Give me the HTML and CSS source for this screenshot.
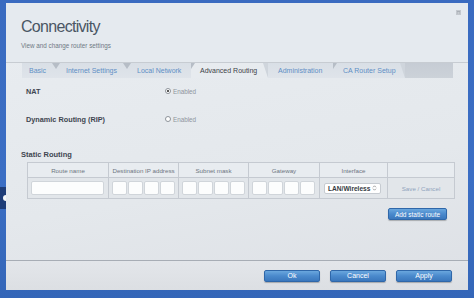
FILE: index.html
```html
<!DOCTYPE html>
<html>
<head>
<meta charset="utf-8">
<link rel="stylesheet" href="styles.css">
</head>
<body>
<div class="handle"></div>
<div class="panel">
  <div class="header">
    <div class="titles">
      <div class="title">Connectivity</div>
      <div class="subtitle">View and change router settings</div>
    </div>
    <div class="close"><svg width="4" height="4" viewBox="0 0 4 4"><path d="M0.8 0.8L3.2 3.2M3.2 0.8L0.8 3.2" stroke="#f2f4f6" stroke-width="0.7"/></svg></div>
  </div>
  <div class="tabs">
    <div class="tab w1">Basic</div>
    <div class="tab w2">Internet Settings</div>
    <div class="tab w3">Local Network</div>
    <div class="tab w4 active">Advanced Routing</div>
    <div class="tab w5">Administration</div>
    <div class="tab w6">CA Router Setup</div>
    <div class="tab-fill"></div>
  </div>
  <div class="content">
    <div class="row nat">
      <div class="label">NAT</div>
      <div class="opt"><span class="radio on"></span>Enabled</div>
    </div>
    <div class="row rip">
      <div class="label">Dynamic Routing (RIP)</div>
      <div class="opt"><span class="radio"></span>Enabled</div>
    </div>
    <div class="section">Static Routing</div>
    <table class="routes">
      <tr class="head">
        <th class="c1">Route name</th>
        <th class="c2">Destination IP address</th>
        <th class="c3">Subnet mask</th>
        <th class="c4">Gateway</th>
        <th class="c5">Interface</th>
        <th class="c6"></th>
      </tr>
      <tr class="body">
        <td><div class="inp name"></div></td>
        <td><div class="ip"><div class="inp"></div><div class="inp"></div><div class="inp"></div><div class="inp"></div></div></td>
        <td><div class="ip"><div class="inp"></div><div class="inp"></div><div class="inp"></div><div class="inp"></div></div></td>
        <td><div class="ip"><div class="inp"></div><div class="inp"></div><div class="inp"></div><div class="inp"></div></div></td>
        <td><div class="select"><span>LAN/Wireless</span><svg width="5" height="6" viewBox="0 0 5 6"><path d="M1 2.3L2.5 0.8L4 2.3M1 3.7L2.5 5.2L4 3.7" fill="none" stroke="#777" stroke-width="0.7"/></svg></div></td>
        <td class="save">Save / Cancel</td>
      </tr>
    </table>
    <div class="addrow"><div class="btn add">Add static route</div></div>
  </div>
  <div class="footer">
    <div class="btn big">Ok</div>
    <div class="btn big">Cancel</div>
    <div class="btn big">Apply</div>
  </div>
</div>
</body>
</html>
```
FILE: styles.css
```css
html, body {
  margin: 0;
  padding: 0;
}
body {
  width: 474px;
  height: 298px;
  box-sizing: border-box;
  padding: 3px 6px 8px 6px;
  background: linear-gradient(180deg, #3a6bc0 0%, #3b6ec4 60%, #3466b8 100%);
  font-family: "Liberation Sans", Arial, sans-serif;
  position: relative;
  overflow: hidden;
}
.handle {
  position: absolute;
  left: 0;
  top: 187px;
  width: 6px;
  height: 22px;
  background: #1e3d78;
}
.handle::after {
  content: "";
  position: absolute;
  left: 3px;
  top: 8px;
  width: 6px;
  height: 6px;
  border-radius: 50%;
  background: #f4f6f8;
}
.panel {
  height: 287px;
  display: flex;
  flex-direction: column;
  background: linear-gradient(170deg, #e9edf1 0%, #e4e8ec 60%, #dde0e5 100%);
  border-radius: 2px;
  position: relative;
  z-index: 1;
}
.header {
  height: 60px;
  box-sizing: border-box;
  display: flex;
  justify-content: space-between;
  align-items: flex-start;
  padding: 7px 7px 0 15px;
  border-bottom: 1px solid #c7ccd2;
  background: #e5eaef;
}
.titles {
  padding-top: 8px;
}
.title {
  font-size: 16px;
  line-height: 18px;
  color: #4a5664;
  letter-spacing: -0.7px;
}
.subtitle {
  margin-top: 6px;
  font-size: 6.3px;
  line-height: 8px;
  color: #6f7984;
}
.close {
  box-sizing: border-box;
  width: 5px;
  height: 5px;
  background: #a9afb6;
  border: 0.5px solid #c3c8ce;
  display: flex;
  align-items: center;
  justify-content: center;
}
.tabs {
  display: flex;
  height: 15px;
  margin: 0 15px 0 16px;
  background: #cfd5dc;
}
.tab {
  position: relative;
  box-sizing: border-box;
  height: 15px;
  line-height: 15px;
  font-size: 7px;
  color: #5e8fc5;
  padding-left: 7px;
  background: linear-gradient(180deg, #d9dfe6 0%, #dfe4ea 100%);
}
.tab + .tab::before {
  content: "";
  position: absolute;
  left: -4px;
  top: 0;
  border-top: 6px solid #b6bdc6;
  border-left: 4px solid transparent;
  border-right: 4px solid transparent;
}
.tab.active {
  background: #e7ebef;
  color: #3c4147;
  padding-left: 9px;
  clip-path: polygon(0 0, calc(100% - 5px) 0, 100% 100%, 0 100%);
}
.tab.active + .tab::before {
  display: none;
}
.w1 { width: 34px; }
.w2 { width: 71px; padding-left: 10px; }
.w3 { width: 64px; padding-left: 10px; }
.w4 { width: 77px; }
.w5 { width: 65px; padding-left: 10px; }
.w6 { width: 72px; padding-left: 10px; clip-path: polygon(0 0, calc(100% - 5px) 0, 100% 100%, 0 100%); }
.tab-fill {
  flex: 1;
  background: linear-gradient(180deg, #c6ccd4 0%, #ccd2d9 100%);
}
.content {
  flex: 1;
  padding: 0 20px 0 15px;
}
.row {
  display: flex;
  align-items: center;
  height: 10px;
  padding-left: 5px;
}
.nat { margin-top: 8px; }
.rip { margin-top: 18px; }
.label {
  width: 139px;
  font-size: 7.3px;
  font-weight: bold;
  color: #3e4650;
}
.opt {
  display: flex;
  align-items: center;
  font-size: 6.3px;
  color: #8e959d;
}
.radio {
  width: 4px;
  height: 4px;
  border: 0.8px solid #8d939a;
  border-radius: 50%;
  background: #fff;
  margin-right: 2px;
  position: relative;
}
.radio.on::after {
  content: "";
  position: absolute;
  left: 1px;
  top: 1px;
  width: 2px;
  height: 2px;
  border-radius: 50%;
  background: #222;
}
.section {
  margin-top: 26px;
  height: 10px;
  line-height: 10px;
  font-size: 7.5px;
  font-weight: bold;
  color: #3e4650;
}
.routes {
  margin: 2px 0 0 6px;
  border-collapse: collapse;
  width: 421px;
  table-layout: fixed;
}
.routes th, .routes td {
  border: 1px solid #c5cad1;
  padding: 0;
  text-align: center;
}
.routes th {
  height: 14px;
  font-size: 6.2px;
  font-weight: normal;
  color: #6d7580;
  background: #e8ecf0;
}
.routes td {
  height: 20px;
  background: #e2e6ea;
}
.c1 { width: 80px; }
.c2 { width: 69px; }
.c3 { width: 69px; }
.c4 { width: 70px; }
.c5 { width: 67px; }
.c6 { width: 66px; }
.inp {
  box-sizing: border-box;
  height: 14px;
  background: #fcfdfd;
  border: 1px solid #d0d5da;
  border-radius: 2px;
}
.name {
  width: 73px;
  margin-left: 3px;
}
.ip {
  display: grid;
  grid-template-columns: repeat(4, 1fr);
  gap: 1.5px;
  width: 63px;
  margin-left: 3px;
}
.select {
  box-sizing: border-box;
  display: flex;
  align-items: center;
  justify-content: space-between;
  width: 57px;
  height: 11px;
  margin-left: 4px;
  padding: 0 3px 0 3px;
  background: #fff;
  border: 1px solid #c6cbd1;
  border-radius: 2px;
  font-size: 6.6px;
  font-weight: bold;
  color: #333a42;
}
.routes td.save {
  font-size: 6.2px;
  color: #8fa3bd;
}
.addrow {
  display: flex;
  justify-content: flex-end;
  margin-top: 9px;
  padding-right: 1px;
}
.btn {
  box-sizing: border-box;
  display: flex;
  align-items: center;
  justify-content: center;
  color: #fff;
  background: linear-gradient(180deg, #6aa7de 0%, #4a89cc 50%, #3b78bd 100%);
  border: 1px solid #2f67a9;
  border-radius: 2px;
  box-shadow: 0 1px 1px rgba(0,0,0,0.25);
}
.add {
  width: 59px;
  height: 12px;
  font-size: 6.5px;
}
.footer {
  height: 30px;
  box-sizing: border-box;
  border-top: 1px solid #a7adb5;
  display: flex;
  justify-content: flex-end;
  align-items: center;
  gap: 10px;
  padding: 0 16px 0 0;
  background: linear-gradient(180deg, #e3e6ea 0%, #dcdfe3 100%);
}
.big {
  width: 56px;
  height: 12px;
  font-size: 7px;
}
```
